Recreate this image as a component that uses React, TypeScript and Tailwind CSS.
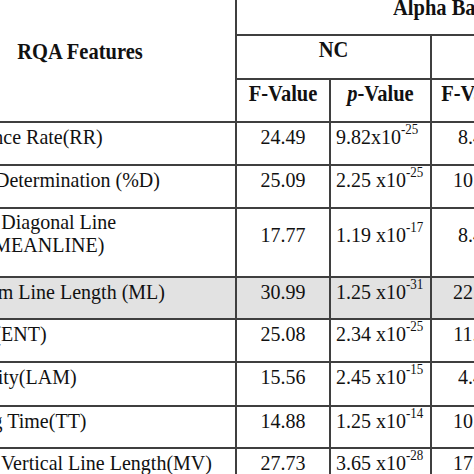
type Row = {
  label: React.ReactNode;
  ncF: string;
  ncP: [string, string];
  otherF: string;
  otherP: [string, string];
  tall?: boolean;
  shaded?: boolean;
};

const rows: Row[] = [
  { label: "Recurrence Rate(RR)", ncF: "24.49", ncP: ["9.82x10", "-25"], otherF: "8.47", otherP: ["3.11 x10", "-08"] },
  { label: "Percent Determination (%D)", ncF: "25.09", ncP: ["2.25 x10", "-25"], otherF: "10.12", otherP: ["4.02 x10", "-10"] },
  {
    label: (
      <>
        Average Diagonal Line
        <br />
        Length(MEANLINE)
      </>
    ),
    ncF: "17.77",
    ncP: ["1.19 x10", "-17"],
    otherF: "8.41",
    otherP: ["3.56 x10", "-08"],
    tall: true,
  },
  { label: "Maximum Line Length (ML)", ncF: "30.99", ncP: ["1.25 x10", "-31"], otherF: "22.36", otherP: ["2.70 x10", "-22"], shaded: true },
  { label: "Entropy(ENT)", ncF: "25.08", ncP: ["2.34 x10", "-25"], otherF: "11.05", otherP: ["3.18 x10", "-11"] },
  { label: "Laminarity(LAM)", ncF: "15.56", ncP: ["2.45 x10", "-15"], otherF: "4.46", otherP: ["1.02 x10", "-04"] },
  { label: "Trapping Time(TT)", ncF: "14.88", ncP: ["1.25 x10", "-14"], otherF: "10.37", otherP: ["2.41 x10", "-10"] },
  { label: "Average Vertical Line Length(MV)", ncF: "27.73", ncP: ["3.65 x10", "-28"], otherF: "17.21", otherP: ["1.88 x10", "-17"] },
];

// the scanned table's type is a little taller than it is wide
function Txt({ children }: { children: React.ReactNode }) {
  return <span className="inline-block scale-y-110">{children}</span>;
}

function PValue({ value }: { value: [string, string] }) {
  return (
    <Txt>
      {value[0]}
      <sup className="top-[-9px] text-[13px]">{value[1]}</sup>
    </Txt>
  );
}

function BodyRow({ row }: { row: Row }) {
  const bg = row.shaded ? "bg-[#e2e2e2]" : "bg-white";
  const valuePad = row.tall ? "pt-[15px]" : "pt-[3px]";

  return (
    <>
      <div className={`${bg} pl-[5px] pt-[3px]`}>
        <Txt>{row.label}</Txt>
      </div>
      <div className={`${bg} ${valuePad} text-center`}>
        <Txt>{row.ncF}</Txt>
      </div>
      <div className={`${bg} ${valuePad} pl-[5px] whitespace-nowrap`}>
        <PValue value={row.ncP} />
      </div>
      <div className={`${bg} ${valuePad} text-center`}>
        <Txt>{row.otherF}</Txt>
      </div>
      <div className={`${bg} ${valuePad} pl-[5px] whitespace-nowrap`}>
        <PValue value={row.otherP} />
      </div>
    </>
  );
}

export default function App() {
  return (
    <div className="h-[474px] w-[474px] overflow-hidden bg-white font-['Liberation_Serif','Times_New_Roman',serif] text-[20px] leading-[21px] text-[#111]">
      <div className="-ml-[77px] -mt-[21px] grid w-max grid-cols-[310px_92px_99px_87px_99px] grid-rows-[53px_42px_41px_41px_41px_67px_40px_41px_42px_40px_41px] gap-[2px] bg-[#3f3f3f] p-[2px]">
        <div className="row-span-3 flex items-center justify-center bg-white text-[20.5px] font-bold">
          <Txt>RQA Features</Txt>
        </div>
        <div className="col-span-4 flex items-center bg-white pl-[156px] text-[20.5px] font-bold">
          <Txt>Alpha Band</Txt>
        </div>

        <div className="col-span-2 bg-white pt-[3px] text-center text-[20.5px] font-bold">
          <Txt>NC</Txt>
        </div>
        <div className="col-span-2 bg-white pt-[3px] text-center text-[20.5px] font-bold">
          <Txt>MCI</Txt>
        </div>

        <div className="bg-white pt-[3px] text-center text-[20.5px] font-bold">
          <Txt>F-Value</Txt>
        </div>
        <div className="bg-white pt-[3px] text-center text-[20.5px] font-bold">
          <Txt>
            <i>p</i>-Value
          </Txt>
        </div>
        <div className="bg-white pt-[3px] text-center text-[20.5px] font-bold">
          <Txt>F-Value</Txt>
        </div>
        <div className="bg-white pt-[3px] text-center text-[20.5px] font-bold">
          <Txt>
            <i>p</i>-Value
          </Txt>
        </div>

        {rows.map((row, i) => (
          <BodyRow key={i} row={row} />
        ))}
      </div>
    </div>
  );
}
